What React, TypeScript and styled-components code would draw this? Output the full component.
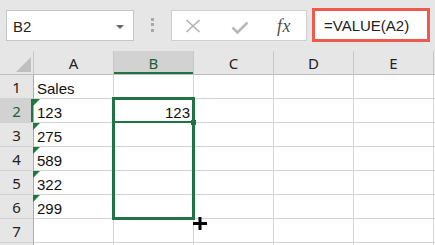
import styled, { createGlobalStyle } from 'styled-components';

const GREEN = '#217346';
const columns = ['A', 'B', 'C', 'D', 'E'];

interface ICell {
  text?: string
  right?: boolean
  flag?: boolean
}

// rows 1..7 are shown, row 8 only peeks in at the bottom edge
const rows: ICell[][] = [
  [{ text: 'Sales' }],
  [{ text: '123', flag: true }, { text: '123', right: true }],
  [{ text: '275', flag: true }],
  [{ text: '589', flag: true }],
  [{ text: '322', flag: true }],
  [{ text: '299', flag: true }],
  [],
  [],
];

function App() {
  return (
    <>
      <GlobalStyles />
      <Page>
        <Toolbar>
          <NameBox>
            <span>B2</span>
            <Caret />
          </NameBox>
          <Grip>
            <i />
            <i />
            <i />
          </Grip>
          <FxButtons>
            <svg width="16" height="14" viewBox="0 0 16 14">
              <path d="M1.5 1 L14.5 13 M14.5 1 L1.5 13" stroke="#b3b3b3" strokeWidth="1.6" fill="none" />
            </svg>
            <svg width="18" height="13" viewBox="0 0 18 13">
              <path d="M1.5 6.5 L6.5 11.5 L16.5 1.5" stroke="#b8b8b8" strokeWidth="2.6" fill="none" />
            </svg>
            <FxLabel>fx</FxLabel>
          </FxButtons>
          <FormulaBox>=VALUE(A2)</FormulaBox>
        </Toolbar>

        <Sheet>
          <Corner><i /></Corner>
          {columns.map(c => (
            <ColHeader key={c} active={c === 'B'}>{c}</ColHeader>
          ))}
          <ColHeader active={false} />

          {rows.map((row, r) => (
            <Row key={r} r={r} row={row} />
          ))}

          <Selection>
            <ActiveLine />
            <Handle />
          </Selection>
          <Cursor width="14" height="13" viewBox="0 0 14 13">
            <path d="M7 0 V13 M0 6.5 H14" stroke="#000" strokeWidth="3" fill="none" />
          </Cursor>
        </Sheet>
      </Page>
    </>
  );
}

function Row({ r, row }: { r: number, row: ICell[] }) {
  return (
    <>
      <RowHeader active={r === 1}>{r < 7 ? r + 1 : ''}</RowHeader>
      {columns.map((c, i) => {
        const cell = row[i] || {};
        return (
          <Cell key={c} right={!!cell.right} flag={!!cell.flag}>{cell.text}</Cell>
        );
      })}
      <Cell right={false} flag={false} />
    </>
  );
}

export default App;

const GlobalStyles = createGlobalStyle`
  html, body {
    margin: 0;
    padding: 0;
    background: #fff;
  }
  body {
    font-family: "Liberation Sans", Arial, sans-serif;
  }
`;

const Page = styled.div`
  width: 435px;
  height: 245px;
  overflow: hidden;
  background: #fff;
`;

const Toolbar = styled.div`
  height: 51px;
  background: #e6e6e6;
  display: flex;
  align-items: flex-start;
  padding: 8px 0 0 6px;
  box-sizing: border-box;
`;

const NameBox = styled.div`
  margin-top: 2px;
  width: 128px;
  height: 31px;
  box-sizing: border-box;
  background: #fff;
  border: 1px solid #c6c6c6;
  display: flex;
  align-items: center;
  justify-content: space-between;
  padding: 1px 9px 0 6px;
  font-size: 15px;
  color: #222;
`;

const Caret = styled.i`
  width: 0;
  height: 0;
  border-left: 4px solid transparent;
  border-right: 4px solid transparent;
  border-top: 4px solid #666;
  margin-top: 1px;
`;

const Grip = styled.div`
  width: 37px;
  height: 33px;
  display: flex;
  flex-direction: column;
  align-items: center;
  justify-content: center;
  gap: 2.5px;

  & i {
    width: 3px;
    height: 3px;
    background: #a8a8a8;
  }
`;

const FxButtons = styled.div`
  margin-top: 2px;
  width: 136px;
  height: 31px;
  box-sizing: border-box;
  background: #fff;
  border: 1px solid #cfcfcf;
  display: flex;
  align-items: center;
  padding: 1px 0 0 13px;
  gap: 30px;

  & svg:nth-child(2) {
    margin-top: 3px;
  }
`;

const FxLabel = styled.span`
  font-family: "Liberation Serif", "DejaVu Serif", serif;
  font-style: italic;
  font-size: 18px;
  color: #505050;
  margin-left: -2px;
  letter-spacing: 0.5px;
`;

const FormulaBox = styled.div`
  margin-left: 5px;
  width: 118px;
  height: 34px;
  box-sizing: border-box;
  background: #fff;
  border: 3.5px solid #f05a4c;
  display: flex;
  align-items: center;
  padding: 1px 0 0 9px;
  font-size: 15px;
  color: #222;
  white-space: nowrap;
`;

const Sheet = styled.div`
  position: relative;
  display: grid;
  grid-template-columns: 34px repeat(5, 80px) 1fr;
  grid-template-rows: repeat(9, 24px);
  background: #fff;
`;

const Corner = styled.div`
  background: #e6e6e6;
  border-right: 1px solid #c8c8c8;
  border-bottom: 1px solid #bdbdbd;
  box-sizing: border-box;
  display: flex;
  align-items: flex-end;
  justify-content: flex-end;
  padding: 0 2px 2px 0;

  & i {
    width: 0;
    height: 0;
    border-left: 15px solid transparent;
    border-bottom: 15px solid #bfbfbf;
  }
`;

const ColHeader = styled.div<{ active: boolean }>`
  background: ${p => (p.active ? '#d2d2d2' : '#e6e6e6')};
  color: ${p => (p.active ? '#1d5e3a' : '#222')};
  border-right: 1px solid #c8c8c8;
  border-bottom: 1px solid #bdbdbd;
  box-shadow: ${p => (p.active ? `inset 0 -2px 0 ${GREEN}` : 'none')};
  box-sizing: border-box;
  font-family: "Noto Sans", "Open Sans", sans-serif;
  font-size: 15px;
  line-height: 24px;
  text-align: center;
`;

const RowHeader = styled.div<{ active: boolean }>`
  background: ${p => (p.active ? '#d2d2d2' : '#e6e6e6')};
  color: ${p => (p.active ? '#1d5e3a' : '#222')};
  border-right: 1px solid #ababab;
  border-bottom: 1px solid #d0d0d0;
  box-shadow: ${p => (p.active ? `inset -2px 0 0 ${GREEN}` : 'none')};
  box-sizing: border-box;
  font-family: "Noto Sans", "Open Sans", sans-serif;
  font-size: 15px;
  line-height: 24px;
  text-align: center;
`;

const Cell = styled.div<{ right: boolean, flag: boolean }>`
  position: relative;
  border-right: 1px solid #d4d4d4;
  border-bottom: 1px solid #d4d4d4;
  box-sizing: border-box;
  font-size: 15px;
  line-height: 20px;
  padding: 4px 3px 0 3px;
  color: #111;
  text-align: ${p => (p.right ? 'right' : 'left')};
  white-space: nowrap;

  &::before {
    content: '';
    display: ${p => (p.flag ? 'block' : 'none')};
    position: absolute;
    top: 0;
    left: -1px;
    width: 0;
    height: 0;
    border-top: 7px solid #1f7a3a;
    border-right: 7px solid transparent;
  }
`;

const Selection = styled.div`
  position: absolute;
  left: 112px;
  top: 46px;
  width: 83px;
  height: 123px;
  border: 3px solid ${GREEN};
  box-sizing: border-box;
`;

const ActiveLine = styled.div`
  position: absolute;
  left: 0;
  right: 0;
  top: 21px;
  height: 2px;
  background: ${GREEN};
`;

const Handle = styled.div`
  position: absolute;
  right: -4px;
  top: 20px;
  width: 5px;
  height: 5px;
  background: ${GREEN};
`;

const Cursor = styled.svg`
  position: absolute;
  left: 193px;
  top: 166px;
`;
